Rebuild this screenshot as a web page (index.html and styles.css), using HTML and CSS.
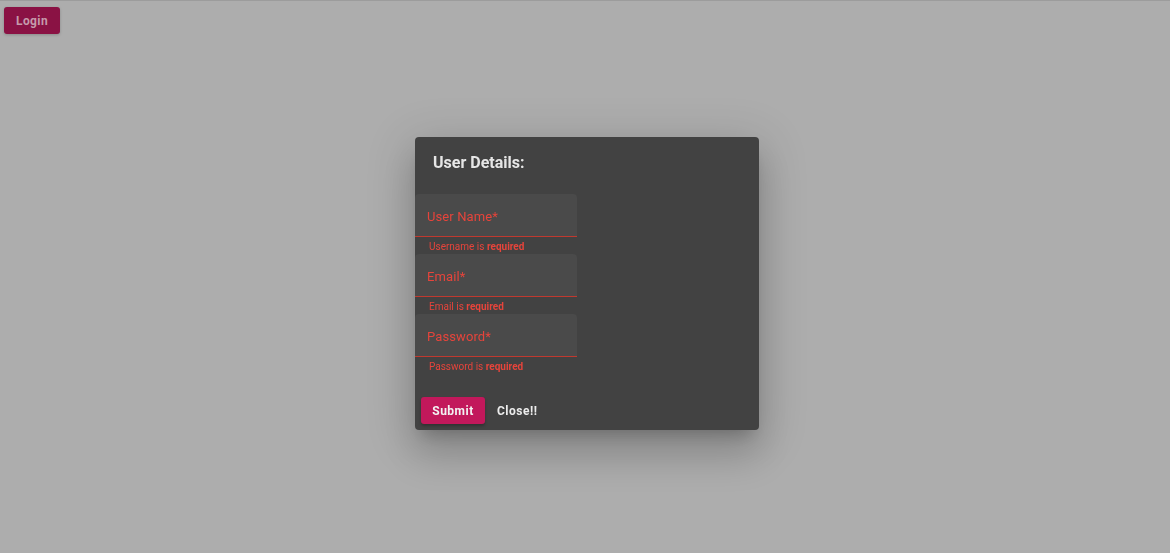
FILE: index.html
```html
<!DOCTYPE html>
<html>
<head>
<meta charset="utf-8">
<link rel="stylesheet" href="styles.css">
</head>
<body>
<div class="page">
  <button class="login-btn">Login</button>
</div>
<div class="backdrop">
  <div class="dialog">
    <h2 class="dialog-title">User Details:</h2>
    <form class="form">
      <div class="field">
        <div class="fill"><span class="label">User Name*</span></div>
        <div class="error">Username is <b>required</b></div>
      </div>
      <div class="field">
        <div class="fill"><span class="label">Email*</span></div>
        <div class="error">Email is <b>required</b></div>
      </div>
      <div class="field">
        <div class="fill"><span class="label">Password*</span></div>
        <div class="error">Password is <b>required</b></div>
      </div>
    </form>
    <div class="actions">
      <button class="btn-submit">Submit</button>
      <button class="btn-close">Close!!</button>
    </div>
  </div>
</div>
</body>
</html>
```

FILE: styles.css
```css
html, body {
  margin: 0;
  padding: 0;
  height: 100%;
}
body {
  font-family: Roboto, "Liberation Sans", sans-serif;
  background: #adadad;
  border-top: 1px solid #9c9c9c;
  box-sizing: border-box;
  overflow: hidden;
}
.page {
  padding: 6px 0 0 4px;
}
.login-btn {
  width: 56px;
  height: 27px;
  border: none;
  border-radius: 3px;
  background: #8a1244;
  color: #c59bab;
  font-family: Roboto, "Liberation Sans", sans-serif;
  font-weight: 700;
  font-size: 12px;
  letter-spacing: 0.4px;
  padding: 0;
  box-shadow: 0 1px 3px rgba(0,0,0,0.2);
}
.backdrop {
  position: fixed;
  inset: 0;
  display: flex;
  justify-content: center;
  align-items: center;
  padding: 14px 0 0 4px;
}
.dialog {
  width: 344px;
  height: 293px;
  background: #424242;
  border-radius: 4px;
  box-shadow: 0 11px 15px -7px rgba(0,0,0,0.2), 0 24px 38px 3px rgba(0,0,0,0.14), 0 9px 46px 8px rgba(0,0,0,0.12);
  box-sizing: border-box;
  display: flex;
  flex-direction: column;
}
.dialog-title {
  margin: 0;
  height: 57px;
  padding: 16px 0 0 18px;
  box-sizing: border-box;
  font-size: 16px;
  line-height: 20px;
  font-weight: 700;
  color: #e6e6e6;
}
.form {
  display: flex;
  flex-direction: column;
}
.field {
  width: 162px;
  height: 60px;
}
.fill {
  height: 42px;
  background: #4a4a4a;
  border-radius: 4px 4px 0 0;
  border-bottom: 1px solid #c0392f;
  display: flex;
  align-items: center;
  padding: 0 12px;
}
.label {
  color: #e6443b;
  font-size: 13px;
  letter-spacing: 0.1px;
  padding-top: 2px;
}
.error {
  color: #e6443b;
  font-size: 10px;
  line-height: 17px;
  padding: 1px 0 0 14px;
}
.error b {
  font-weight: 700;
}
.actions {
  margin-top: auto;
  padding: 0 0 6px 6px;
  display: flex;
  align-items: center;
  gap: 4px;
}
.btn-submit {
  width: 64px;
  height: 27px;
  border: none;
  border-radius: 3px;
  background: #c2185b;
  color: #f2f2f2;
  font-family: Roboto, "Liberation Sans", sans-serif;
  font-weight: 700;
  font-size: 12px;
  letter-spacing: 0.5px;
  padding: 0;
  box-shadow: 0 2px 3px rgba(0,0,0,0.25);
}
.btn-close {
  height: 27px;
  border: none;
  background: transparent;
  color: #ececec;
  font-family: Roboto, "Liberation Sans", sans-serif;
  font-weight: 700;
  font-size: 12px;
  letter-spacing: 0.5px;
  padding: 0 8px;
}
```
